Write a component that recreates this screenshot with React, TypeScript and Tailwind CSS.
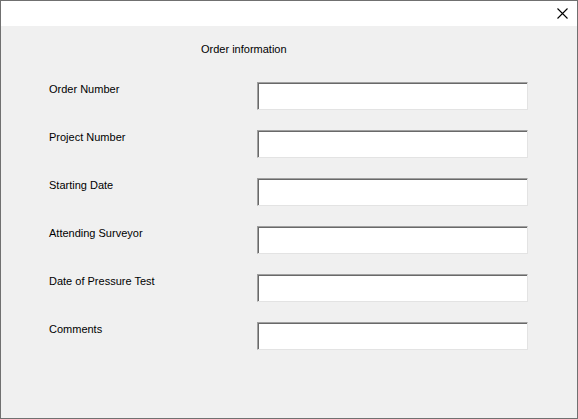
import React from "react";

const fields = [
  "Order Number",
  "Project Number",
  "Starting Date",
  "Attending Surveyor",
  "Date of Pressure Test",
  "Comments",
];

export default function App() {
  return (
    <div
      className="w-[578px] h-[419px] border border-[#707070] flex flex-col bg-[#f0f0f0] text-black"
      style={{ fontFamily: '"Liberation Sans", Arial, sans-serif' }}
    >
      <div className="h-[25px] bg-white flex items-center justify-end pr-[9px] shrink-0">
        <svg width="11" height="11" viewBox="0 0 11 11" className="block">
          <path d="M0.5 0.5 L10.5 10.5 M10.5 0.5 L0.5 10.5" stroke="#000" strokeWidth="1.1" fill="none" />
        </svg>
      </div>
      <div className="flex-1 pt-[17px] pl-[48px]">
        <div className="pl-[152px] text-[11px] leading-[13px]">Order information</div>
        <div className="mt-[26px] flex flex-col gap-[20px]">
          {fields.map((f) => (
            <div key={f} className="flex items-start">
              <div className="w-[208px] pt-[1px] text-[11px] leading-[13px]">{f}</div>
              <div className="w-[271px] h-[28px] bg-white border-t border-l border-[#a0a0a0] border-r border-b border-r-[#e3e3e3] border-b-[#e3e3e3] shadow-[inset_1px_1px_0_#696969]" />
            </div>
          ))}
        </div>
      </div>
    </div>
  );
}
